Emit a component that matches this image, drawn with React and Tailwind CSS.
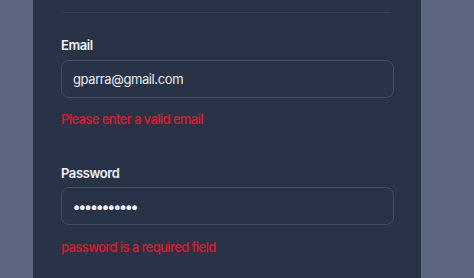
export default function App() {
  return (
    <div className="flex h-[278px] w-[474px] overflow-hidden bg-[#5f6680] font-['Inter',sans-serif]">
      <div className="w-[33px] shrink-0" />
      <div className="flex w-[388px] shrink-0 flex-col bg-[#283347] px-[28px] pt-[12px]">
        <div className="mx-[2px] h-px bg-[#334157]" />

        <label className="mt-[24px] block text-[13px] font-semibold leading-[16px] tracking-[-0.4px] text-[#f1f3f7]">
          Email
        </label>
        <input
          type="email"
          defaultValue="gparra@gmail.com"
          className="mt-[7px] h-[38px] w-[333px] rounded-[8px] border border-[#414d63] bg-[#283347] px-[11px] text-[13px] tracking-[-0.4px] text-[#e8ebf1] outline-none"
        />
        <p className="mt-[13px] text-[13px] font-medium leading-[16px] tracking-[-0.6px] text-[#e0162b]">
          Please enter a valid email
        </p>

        <label className="mt-[38px] block text-[13px] font-semibold leading-[16px] tracking-[-0.4px] text-[#f1f3f7]">
          Password
        </label>
        <input
          type="password"
          defaultValue="gparra12345"
          className="mt-[6px] h-[38px] w-[333px] rounded-[8px] border border-[#414d63] bg-[#283347] px-[11px] text-[15px] font-bold tracking-[-1.3px] text-[#eef0f5] outline-none"
        />
        <p className="mt-[14px] text-[13px] font-medium leading-[16px] tracking-[-0.6px] text-[#e0162b]">
          password is a required field
        </p>
      </div>
      <div className="w-px shrink-0 bg-[#6b7290]" />
    </div>
  );
}
